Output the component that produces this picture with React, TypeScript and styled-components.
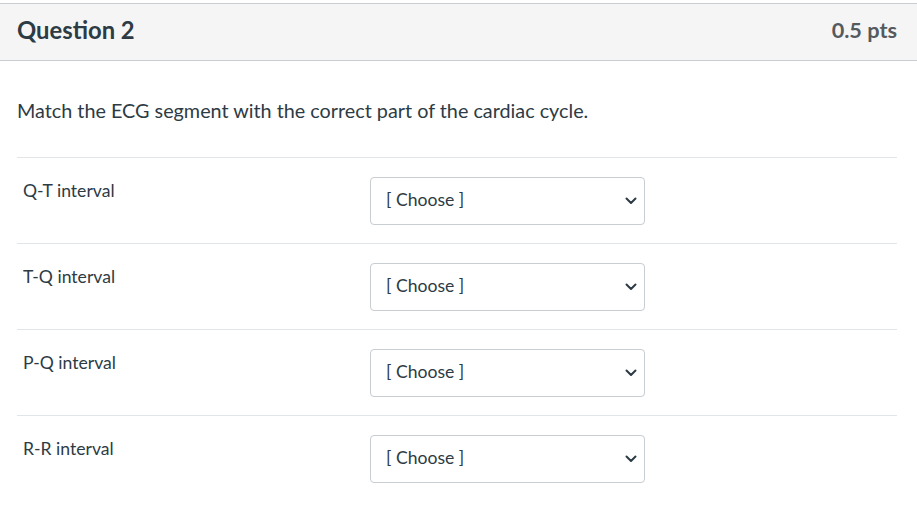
import React from 'react'
import styled, { createGlobalStyle } from 'styled-components'

const GlobalStyle = createGlobalStyle`
  html, body {
    margin: 0;
    padding: 0;
    background: #ffffff;
    font-family: Lato, "Liberation Sans", sans-serif;
    color: #2d3b45;
  }
`

const rows = ['Q-T interval', 'T-Q interval', 'P-Q interval', 'R-R interval']

const App: React.FC = () => {
  return (
    <>
      <GlobalStyle />
      <Container>
        <Header>
          <Title>Question 2</Title>
          <Points>0.5 pts</Points>
        </Header>
        <Body>
          <Prompt>Match the ECG segment with the correct part of the cardiac cycle.</Prompt>
          <Answers>
            {rows.map((label) => (
              <AnswerRow key={label}>
                <AnswerLabel>{label}</AnswerLabel>
                <SelectWrap>
                  <Select defaultValue="">
                    <option value="">[ Choose ]</option>
                  </Select>
                  <Chevron width="12" height="8" viewBox="0 0 12 8">
                    <polyline points="1.5,1.5 6,6 10.5,1.5" fill="none" stroke="#2d3b45" strokeWidth="2" strokeLinecap="round" strokeLinejoin="round" />
                  </Chevron>
                </SelectWrap>
              </AnswerRow>
            ))}
          </Answers>
        </Body>
      </Container>
    </>
  )
}

const Container = styled.div`
  width: 917px;
  padding-top: 3px;
`

const Header = styled.div`
  display: flex;
  align-items: center;
  justify-content: space-between;
  height: 56px;
  padding: 0 20px 4px 17px;
  box-sizing: border-box;
  height: 58px;
  background: #f5f5f5;
  border-top: 1px solid #c7cdd1;
  border-bottom: 1px solid #c7cdd1;
`

const Title = styled.h2`
  margin: 0;
  font-size: 23.8px;
  line-height: 28px;
  font-weight: 700;
  color: #2d3b45;
`

const Points = styled.div`
  font-size: 21.7px;
  line-height: 28px;
  font-weight: 700;
  color: #555a5e;
`

const Body = styled.div`
  padding: 0 20px 0 17px;
`

const Prompt = styled.p`
  margin: 0;
  padding: 37px 0 35px;
  font-size: 19.8px;
  line-height: 24px;
`

const Answers = styled.div`
  display: flex;
  flex-direction: column;
`

const AnswerRow = styled.div`
  display: grid;
  grid-template-columns: 347px 275px;
  padding: 19px 0 18px 6px;
  border-top: 1px solid #e2e5e7;
`

const AnswerLabel = styled.div`
  padding-top: 2px;
  font-size: 17.6px;
  line-height: 24px;
`

const SelectWrap = styled.div`
  position: relative;
  height: 48px;
`

const Select = styled.select`
  appearance: none;
  width: 100%;
  height: 48px;
  padding: 0 30px 4px 15px;
  border: 1px solid #c7cdd1;
  border-radius: 4px;
  background: #ffffff;
  font-family: Lato, "Liberation Sans", sans-serif;
  font-size: 17.6px;
  color: #2d3b45;
`

const Chevron = styled.svg`
  position: absolute;
  right: 8px;
  top: 20px;
  pointer-events: none;
`

export default App
